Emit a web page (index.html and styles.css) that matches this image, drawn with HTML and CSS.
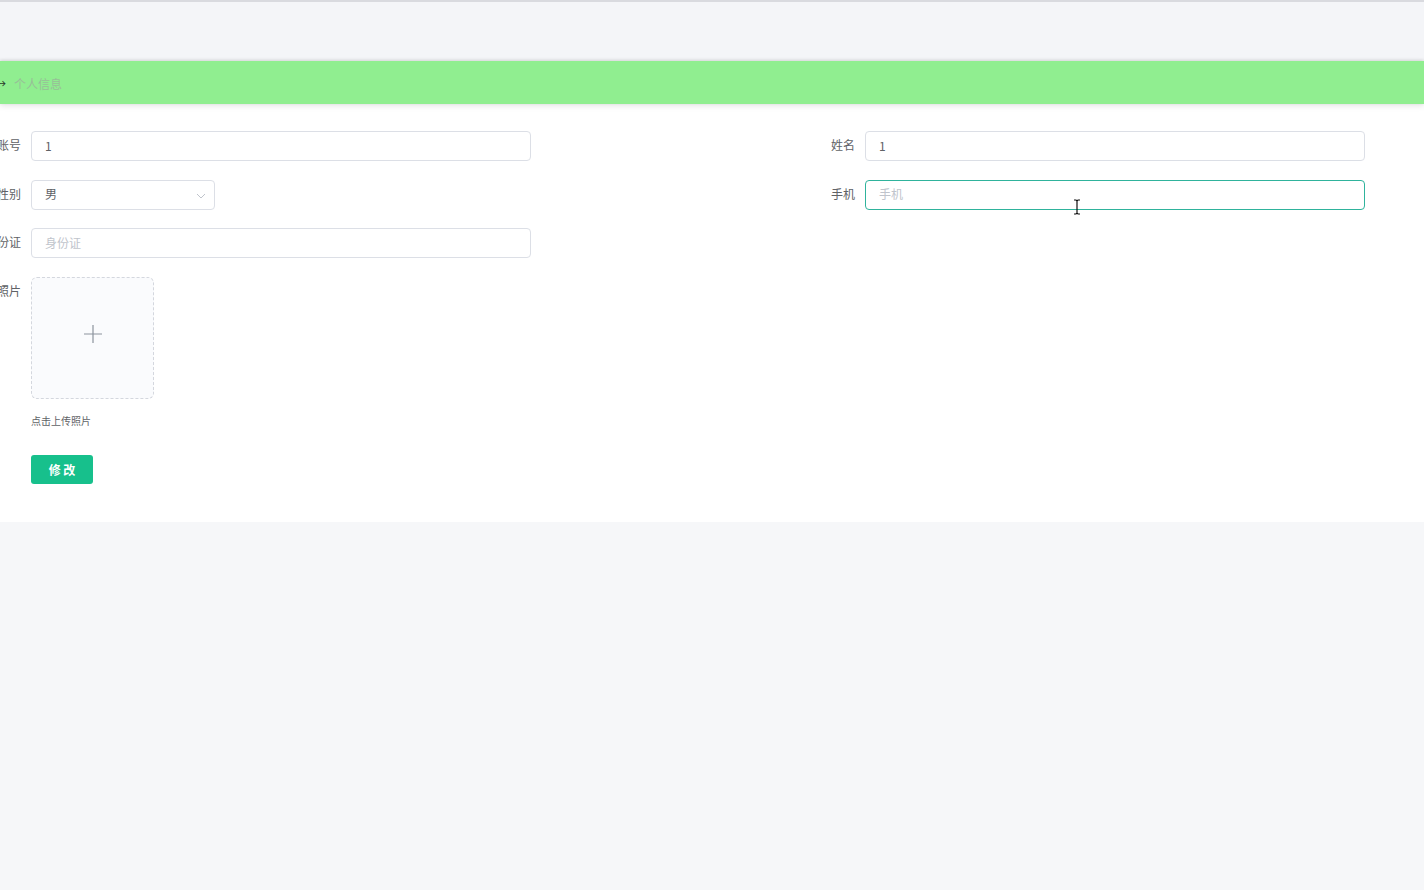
FILE: index.html
```html
<!DOCTYPE html>
<html lang="zh-CN">
<head>
<meta charset="utf-8">
<title>个人信息</title>
<link rel="stylesheet" href="styles.css">
</head>
<body>
<div class="topbar"></div>
<div class="title-bar"><span class="arrow">→</span><span class="title">个人信息</span></div>
<div class="panel">
  <div class="form-grid">
    <div class="row">
      <div class="label">账号</div>
      <div class="input"><span class="value">1</span></div>
    </div>
    <div class="row">
      <div class="label">姓名</div>
      <div class="input"><span class="value">1</span></div>
    </div>
    <div class="row">
      <div class="label">性别</div>
      <div class="input select"><span class="value">男</span>
        <svg class="chev" width="10" height="6" viewBox="0 0 10 6"><path d="M1 1 L5 5 L9 1" fill="none" stroke="#c0c4cc" stroke-width="1"/></svg>
      </div>
    </div>
    <div class="row">
      <div class="label">手机</div>
      <div class="input focused"><span class="placeholder">手机</span></div>
    </div>
    <div class="row">
      <div class="label">身份证</div>
      <div class="input"><span class="placeholder">身份证</span></div>
    </div>
    <div class="row"></div>
    <div class="row top">
      <div class="label">照片</div>
      <div class="upload-wrap">
        <div class="upload">
          <svg width="20" height="20" viewBox="0 0 20 20"><path d="M10 1 V19 M1 10 H19" stroke="#8c939d" stroke-width="1.2" fill="none"/></svg>
        </div>
        <div class="hint">点击上传照片</div>
        <button class="btn">修 改</button>
      </div>
    </div>
  </div>
</div>
<svg class="cursor" width="10" height="16" viewBox="0 0 10 16"><path d="M2 1 H4 L5 2 L6 1 H8 M5 2 V14 M2 15 H4 L5 14 L6 15 H8" fill="none" stroke="#111" stroke-width="1.2"/></svg>
</body>
</html>
```
FILE: styles.css
```css
html, body {
  margin: 0;
  padding: 0;
}
body {
  background: #f6f7f9;
  font-family: "Noto Sans CJK SC", "Noto Sans", sans-serif;
  font-size: 12px;
  color: #606266;
  overflow: hidden;
  position: relative;
  min-height: 890px;
}
.topbar {
  height: 58px;
  border-top: 2px solid #d9dadf;
  background: #f4f5f8;
}
.title-bar {
  height: 43px;
  margin-top: 1px;
  background: #90ee90;
  display: flex;
  align-items: center;
  box-shadow: 0 -1px 3px rgba(0,0,0,0.12), 0 2px 6px rgba(0,0,0,0.10);
  position: relative;
  z-index: 1;
}
.arrow {
  margin-left: -5px;
  color: #2b3a2b;
  font-size: 11px;
  width: 19px;
  padding-top: 1px;
}
.title {
  color: #98be98;
  font-size: 12px;
  padding-top: 1px;
}
.panel {
  background: #ffffff;
  padding: 27px 0 38px 0;
}
.form-grid {
  display: grid;
  grid-template-columns: 834px 1fr;
  row-gap: 18.7px;
}
.row {
  display: flex;
  align-items: center;
  gap: 10px;
}
.row.top {
  align-items: flex-start;
}
.label {
  width: 21px;
  display: flex;
  justify-content: flex-end;
  white-space: nowrap;
  color: #606266;
  font-size: 12px;
  line-height: 28px;
  padding-bottom: 2px;
  flex-shrink: 0;
}
.input {
  width: 500px;
  height: 30px;
  box-sizing: border-box;
  border: 1px solid #dcdfe6;
  border-radius: 4px;
  padding-left: 13px;
  padding-bottom: 2px;
  display: flex;
  align-items: center;
  background: #fff;
  position: relative;
}
.input.select {
  width: 184px;
}
.input.focused {
  border-color: #2fb39c;
}
.chev {
  position: absolute;
  right: 8px;
  top: 12px;
}
.value {
  color: #606266;
}
.placeholder {
  color: #c0c4cc;
}
.upload-wrap {
  display: flex;
  flex-direction: column;
  align-items: flex-start;
}
.upload {
  width: 123px;
  height: 122px;
  box-sizing: border-box;
  border: 1px dashed #d4d7de;
  border-radius: 6px;
  background: #fafbfd;
  display: flex;
  align-items: center;
  justify-content: center;
}
.upload svg {
  margin-top: -8px;
}
.hint {
  font-size: 10px;
  color: #606266;
  margin-top: 14px;
  line-height: 16px;
}
.btn {
  margin-top: 26px;
  width: 62px;
  height: 29px;
  border: none;
  border-radius: 3px;
  background: #17c08c;
  color: #fff;
  font-family: "Noto Sans CJK SC", sans-serif;
  font-size: 12px;
  font-weight: bold;
  padding: 0 0 1px 0;
}
.cursor {
  position: absolute;
  left: 1072px;
  top: 199px;
}
```
